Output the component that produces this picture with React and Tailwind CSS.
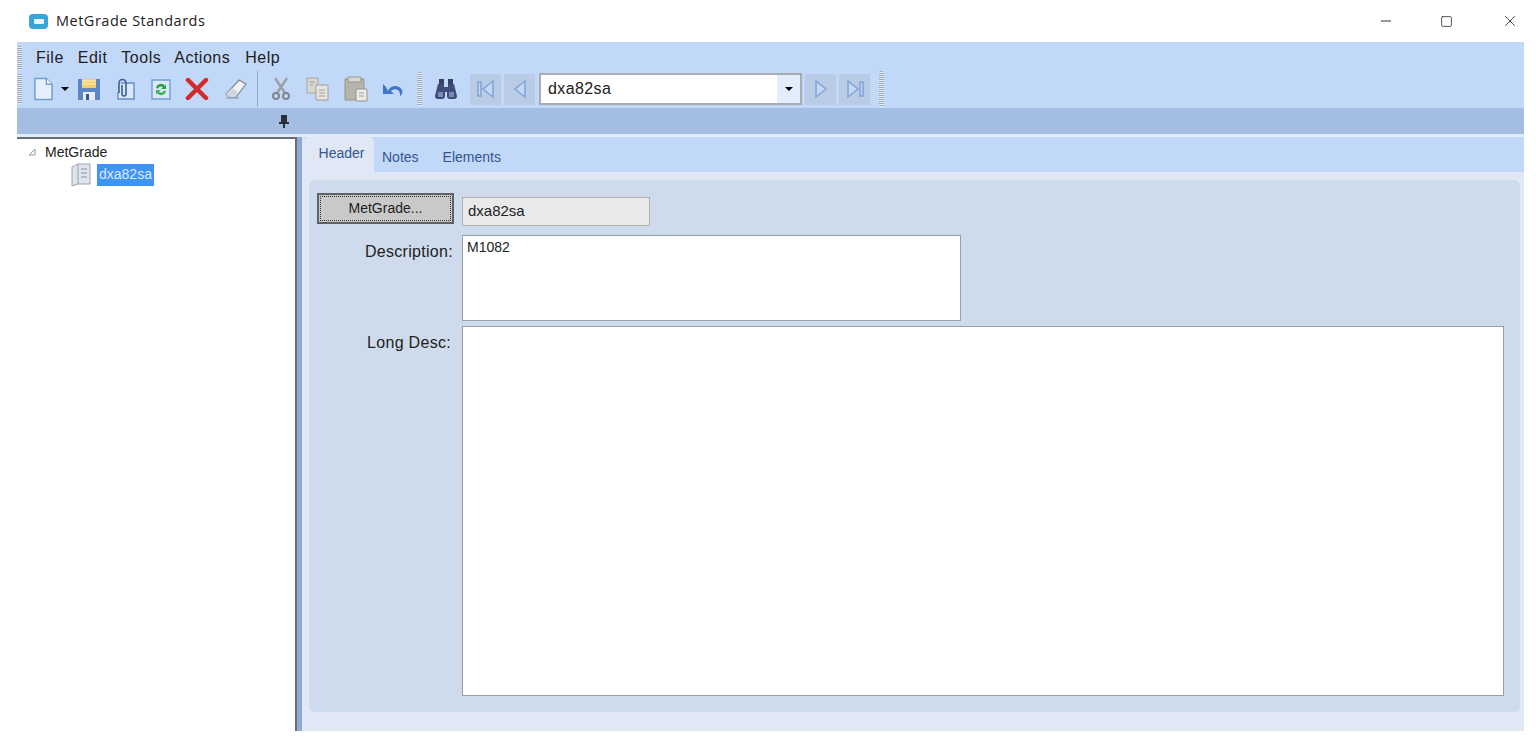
import { Minus, Square, X } from "lucide-react";

const font = "font-['Liberation_Sans',Arial,sans-serif]";

function Grip({ className = "" }) {
  return (
    <div className={`w-[5px] rounded-sm bg-[repeating-linear-gradient(to_bottom,#9aa6b8_0,#9aa6b8_1px,#e8eefa_1px,#e8eefa_2px)] ${className}`} />
  );
}

function NewIcon() {
  return (
    <svg width="22" height="26" viewBox="0 0 22 26">
      <path d="M2 2h12l6 6v16H2z" fill="#e6f0fd" stroke="#6f9ed6" strokeWidth="1.6" />
      <path d="M14 2v6h6" fill="#fff" stroke="#6f9ed6" strokeWidth="1.4" />
    </svg>
  );
}

function SaveIcon() {
  return (
    <svg width="24" height="24" viewBox="0 0 24 24">
      <path d="M1 2h22v21H1z" fill="#5d86c4" />
      <path d="M5 2h14v9H5z" fill="#f1cf6e" />
      <path d="M5 4h14M5 7h14" stroke="#fff2c0" strokeWidth="1" />
      <path d="M6 15h12v8H6z" fill="#e8eef7" />
      <path d="M9 17h3v6H9z" fill="#33589a" />
    </svg>
  );
}

function AttachIcon() {
  return (
    <svg width="22" height="24" viewBox="0 0 22 24">
      <path d="M7 6h13v16H4V15" fill="#dbe8fb" stroke="#5f8fcb" strokeWidth="1.4" />
      <path d="M5 16V6a3.5 3.5 0 0 1 7 0v11a2 2 0 0 1-4 0V8" fill="none" stroke="#3f5f8f" strokeWidth="1.6" />
    </svg>
  );
}

function RefreshIcon() {
  return (
    <svg width="20" height="22" viewBox="0 0 20 22">
      <path d="M1 2h18v19H1z" fill="#dbe8fb" stroke="#6f9ed6" strokeWidth="1.4" />
      <path d="M5 10a5 5 0 0 1 9-2l1-2v5h-5l2-1.500a3 3 0 0 0-5 1z" fill="#2f9e44" />
      <path d="M15 13a5 5 0 0 1-9 2l-1 2v-5h5l-2 1.500a3 3 0 0 0 5-1z" fill="#46b35a" />
    </svg>
  );
}

function DeleteIcon() {
  return (
    <svg width="24" height="22" viewBox="0 0 24 22">
      <path d="M3 2l18 18M21 2L3 20" stroke="#d42a2a" strokeWidth="4.500" strokeLinecap="round" />
    </svg>
  );
}

function EraserIcon() {
  return (
    <svg width="24" height="22" viewBox="0 0 24 22">
      <path d="M15 2l7 4-10 13H5l-3-3z" fill="#f0f2f6" stroke="#7c8796" strokeWidth="1.200" />
      <path d="M2 16l6-6 6 4-3 5H5z" fill="#cfd6e0" />
      <path d="M2 20h13" stroke="#8793a4" strokeWidth="1" />
    </svg>
  );
}

function CutIcon() {
  return (
    <svg width="20" height="24" viewBox="0 0 20 24">
      <path d="M4 1l10 15M16 1L6 16" stroke="#9aa0a8" strokeWidth="2.400" />
      <circle cx="5" cy="19" r="3" fill="none" stroke="#7f858d" strokeWidth="2" />
      <circle cx="15" cy="19" r="3" fill="none" stroke="#7f858d" strokeWidth="2" />
    </svg>
  );
}

function CopyIcon() {
  return (
    <svg width="24" height="24" viewBox="0 0 24 24">
      <path d="M1 1h11v15H1z" fill="#d8d6cf" stroke="#a7a59e" />
      <path d="M10 8h12v15H10z" fill="#e6e5e0" stroke="#a09e97" />
      <path d="M4 5h5M4 8h3M13 13h6M13 16h6M13 19h6" stroke="#a09e97" />
    </svg>
  );
}

function PasteIcon() {
  return (
    <svg width="24" height="26" viewBox="0 0 24 26">
      <path d="M1 3h19v21H1z" fill="#b5b5ae" stroke="#96968f" />
      <path d="M4 1h13v5H4z" fill="#d8d8d2" stroke="#96968f" />
      <path d="M12 13h11v12H12z" fill="#ecebe6" stroke="#96968f" />
      <path d="M15 17h5M15 20h5" stroke="#a09e97" />
    </svg>
  );
}

function UndoIcon() {
  return (
    <svg width="22" height="18" viewBox="0 0 22 18">
      <path d="M6 11C8 5 17 4 20 10c1 2 0 5-2 6 1-5-4-9-9-5l3 3H1V4l3 3z" fill="#3f78c9" />
    </svg>
  );
}

function FindIcon() {
  return (
    <svg width="24" height="22" viewBox="0 0 24 22">
      <path d="M5 1h5v5H5zM14 1h5v5h-5z" fill="#35406a" />
      <path d="M4 6h6v3h4V6h6l3 12a3 3 0 0 1-3 3h-4a3 3 0 0 1-3-3v-4h-2v4a3 3 0 0 1-3 3H4a3 3 0 0 1-3-3z" fill="#3f4b78" />
      <path d="M4 14h5v5H4zM15 14h5v5h-5z" fill="#7d8ab5" />
    </svg>
  );
}

// pale square buttons either side of the record picker
function NavButton({ children }) {
  return <div className="flex h-[31px] w-[31px] items-center justify-center bg-[#b9cbe5]">{children}</div>;
}

const tri = { fill: "#c4d8f5", stroke: "#7fa4d8", strokeWidth: 1.5 };

function Toolbar() {
  return (
    <div className="flex h-[34px] items-center">
      <Grip className="h-[30px]" />
      <div className="ml-[11px] flex w-[21px] justify-center"><NewIcon /></div>
      <div className="ml-[7px] h-0 w-0 border-x-[4px] border-t-[4px] border-x-transparent border-t-black" />
      <div className="ml-[8px]"><SaveIcon /></div>
      <div className="ml-[13px]"><AttachIcon /></div>
      <div className="ml-[15px]"><RefreshIcon /></div>
      <div className="ml-[14px]"><DeleteIcon /></div>
      <div className="ml-[15px]"><EraserIcon /></div>
      <div className="ml-[9px] h-[36px] w-px bg-[#93a9c9]" />
      <div className="ml-[13px]"><CutIcon /></div>
      <div className="ml-[15px]"><CopyIcon /></div>
      <div className="ml-[14px]"><PasteIcon /></div>
      <div className="ml-[14px]"><UndoIcon /></div>
      <Grip className="ml-[13px] h-[34px]" />
      <div className="ml-[12px]"><FindIcon /></div>
      <div className="ml-[12px]">
        <NavButton>
          <svg width="20" height="20" viewBox="0 0 20 20">
            <path d="M2 3h3v14H2z" {...tri} />
            <path d="M17 2v16L7 10z" {...tri} />
          </svg>
        </NavButton>
      </div>
      <div className="ml-[3px]">
        <NavButton>
          <svg width="14" height="20" viewBox="0 0 14 20">
            <path d="M12 2v16L2 10z" {...tri} />
          </svg>
        </NavButton>
      </div>
      <div className="ml-[4px] flex h-[32px] w-[263px] items-center border-2 border-[#a9adb3] bg-white">
        <span className="flex-1 pl-[7px] text-[16px] tracking-[0.4px] text-[#222]">dxa82sa</span>
        <div className="flex h-full w-[23px] items-center justify-center bg-[#e3ecf9]">
          <div className="h-0 w-0 border-x-[4px] border-t-[4px] border-x-transparent border-t-black" />
        </div>
      </div>
      <div className="ml-[3px]">
        <NavButton>
          <svg width="14" height="20" viewBox="0 0 14 20">
            <path d="M2 2v16l10-8z" {...tri} />
          </svg>
        </NavButton>
      </div>
      <div className="ml-[3px]">
        <NavButton>
          <svg width="20" height="20" viewBox="0 0 20 20">
            <path d="M3 2v16l10-8z" {...tri} />
            <path d="M15 3h3v14h-3z" {...tri} />
          </svg>
        </NavButton>
      </div>
      <Grip className="ml-[9px] h-[36px]" />
    </div>
  );
}

function TreePanel() {
  return (
    <div className="w-[280px] border-t-2 border-r-2 border-[#6b6f75] bg-white pt-[3px] text-[14px] text-[#222]">
      <div className="flex h-[20px] items-center">
        <svg className="ml-[11px]" width="8" height="8" viewBox="0 0 8 8">
          <path d="M7 1v6H1z" fill="#fff" stroke="#9a9a9a" />
        </svg>
        <span className="ml-[9px]">MetGrade</span>
      </div>
      <div className="ml-[53px] flex h-[25px] items-center">
        <svg width="22" height="24" viewBox="0 0 22 24">
          <path d="M2 4l6-3h12v20H8l-6 2z" fill="#dfe3ea" stroke="#9aa3b2" />
          <path d="M8 1v20" stroke="#9aa3b2" />
          <path d="M11 6h6M11 10h6M11 14h6" stroke="#8a93a3" />
        </svg>
        <span className="ml-[5px] flex h-[22px] items-center bg-[#3f93f2] px-[2px] text-[#dcebfd]">dxa82sa</span>
      </div>
    </div>
  );
}

function Tabs() {
  return (
    <div className="flex h-[35px] items-end bg-[#c2d8f8] text-[14px] text-[#34568f]">
      <div className="flex h-[35px] w-[70px] items-center justify-center rounded-t-sm bg-[#e0e8f5] pb-[2px] pl-[5px]">Header</div>
      <div className="ml-[8px] flex h-[31px] items-center pt-[1px]">Notes</div>
      <div className="ml-[24px] flex h-[31px] items-center pt-[1px]">Elements</div>
    </div>
  );
}

function FormCard() {
  return (
    <div className="grid h-[532px] grid-cols-[145px_499px_1fr] grid-rows-[42px_91px_1fr] rounded-md bg-[#cddbec] pb-[16px] pl-[8px] pr-[16px] pt-[13px] text-[#222]">
      <div className="col-start-1 flex h-[31px] w-[137px] items-center justify-center border-2 border-[#5f6166] bg-[#c9c9c9] text-[14px] outline-1 -outline-offset-4 outline-dotted outline-[#333]">
        MetGrade...
      </div>
      <div className="col-span-2 mt-[4px] flex h-[29px] w-[188px] items-center border border-[#b0b0b0] bg-[#e9e9e9] pl-[5px] text-[15px]">dxa82sa</div>
      <div className="col-start-1 flex justify-end pr-[9px] pt-[5px] text-[16px] tracking-[0.3px]">Description:</div>
      <div className="col-start-2 h-[86px] border border-[#9a9ea5] bg-white pl-[4px] pt-[1px] text-[14px]">M1082</div>
      <div className="col-start-1 flex justify-end pr-[11px] pt-[5px] text-[16px] tracking-[0.3px]">Long Desc:</div>
      <div className="col-span-2 col-start-2 border border-[#9a9ea5] bg-white" />
    </div>
  );
}

export default function App() {
  return (
    <div className={`flex h-[740px] w-[1536px] flex-col overflow-hidden bg-white ${font}`}>
      <div className="flex h-[42px] items-center">
        <div className="ml-[29px] flex h-[15px] w-[19px] items-center justify-center rounded-[4px] bg-[#38a5d8]">
          <div className="h-[5px] w-[10px] rounded-[1px] bg-[#e8f6fc]" />
        </div>
        <span className="ml-[8px] font-['Open_Sans',sans-serif] text-[14.500px] tracking-[0.5px] text-[#222]">MetGrade Standards</span>
        <div className="ml-auto flex items-center text-[#333]">
          <Minus size={16} strokeWidth={1.5} />
          <Square className="ml-[46px]" size={13} strokeWidth={1.5} />
          <X className="ml-[48px] mr-[17px]" size={18} strokeWidth={1.2} />
        </div>
      </div>

      <div className="ml-[17px] mr-[12px] flex h-[689px] flex-col">
        <div className="flex h-[66px] flex-col bg-[#c2d8f8] pt-[2px]">
          <div className="flex h-[28px] items-center text-[16px] tracking-[0.5px] text-[#222]">
            <Grip className="h-[24px]" />
            <span className="ml-[14px]">File</span>
            <span className="ml-[14px]">Edit</span>
            <span className="ml-[14px]">Tools</span>
            <span className="ml-[13px]">Actions</span>
            <span className="ml-[15px]">Help</span>
          </div>
          <Toolbar />
        </div>

        <div className="flex h-[26px] bg-[#a3bde3]">
          <div className="flex w-[280px] items-center justify-end pr-[8px]">
            <svg width="10" height="14" viewBox="0 0 10 14">
              <path d="M2 1h6v7h2v2H6v4H4v-4H0V8h2z" fill="#2b2f36" />
            </svg>
          </div>
        </div>

        <div className="flex min-h-0 flex-1 bg-[#e3ecf9] pt-[3px]">
          <TreePanel />
          <div className="w-[5px] bg-[#8ea9d6]" />
          <div className="flex min-w-0 flex-1 flex-col border-l-2 border-[#e0e8f5]">
            <Tabs />
            <div className="flex-1 bg-[#e0e8f5] pl-[5px] pr-[4px] pt-[8px]">
              <FormCard />
            </div>
          </div>
        </div>
      </div>
    </div>
  );
}
